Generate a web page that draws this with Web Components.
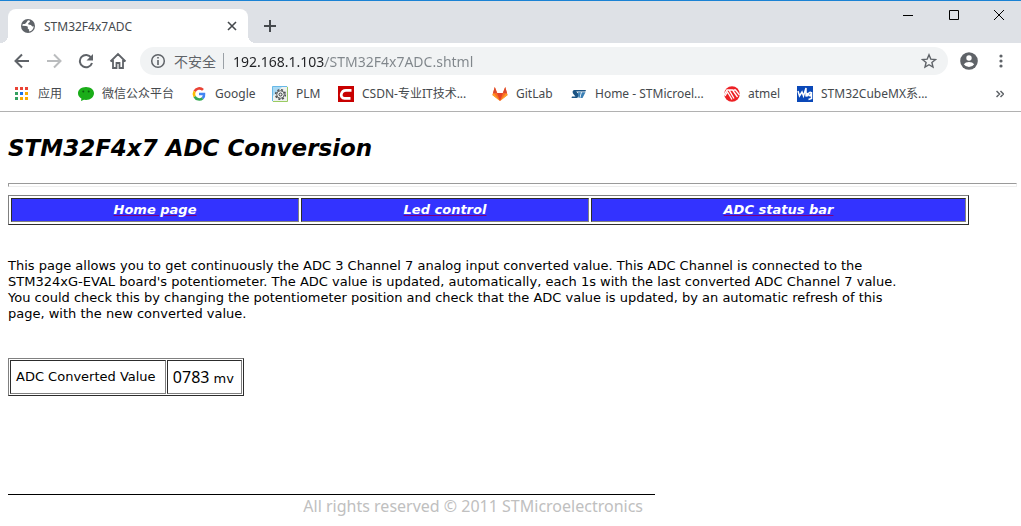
<!DOCTYPE html>
<html lang="en">
<head>
<meta charset="utf-8">
<title>STM32F4x7ADC</title>
<style>
  body { margin: 0; background: #fff; font-family: "Noto Sans", "Noto Sans CJK SC", sans-serif; }
</style>
</head>
<body>
<browser-window></browser-window>

<template id="browser-window">
  <style>
    :host { display: block; }
  </style>
  <tab-strip></tab-strip>
  <nav-bar></nav-bar>
  <bookmark-bar></bookmark-bar>
  <adc-page></adc-page>
</template>

<template id="tab-strip">
  <style>
    :host { display: flex; box-sizing: border-box; height: 43px; padding-left: 8px; background: #dee1e6; border-top: 1px solid #1a82d4; }
    .tab { position: relative; display: flex; align-items: center; box-sizing: border-box; width: 240px; height: 34px; margin-top: 8px; padding: 0 8px 0 12px; background: #fff; border-radius: 8px 8px 0 0; font-size: 12px; color: #45494d; }
    .tab::before, .tab::after { content: ""; position: absolute; bottom: 0; width: 8px; height: 8px; }
    .tab::before { right: 100%; background: radial-gradient(circle at 0 0, transparent 8px, #fff 8px); }
    .tab::after { left: 100%; background: radial-gradient(circle at 100% 0, transparent 8px, #fff 8px); }
    .title { flex: 1; margin-left: 8px; white-space: nowrap; }
    button { display: grid; place-items: center; padding: 0; border: 0; background: none; color: #45494d; }
    .close { width: 16px; height: 16px; }
    .new { width: 28px; height: 28px; margin: 11px 0 0 8px; }
    .controls { display: flex; margin-left: auto; }
    .controls button { width: 46px; height: 28px; color: #000; }
    .controls button:last-child { width: 44px; }
    svg { display: block; }
  </style>
  <div class="tab">
    <svg width="16" height="16" viewBox="0 0 16 16"><circle cx="8" cy="8" r="7" fill="#5f6368"/><path d="M8 2.2l2 .5-.2 1.3-1.6 1.2.2 1.4 2.5.3 1.4 1.5 1.4-.2a5.7 5.7 0 0 1-4.7 5.3l.2-1.8-1.5-1.2.2-1.8-1.7-.8-3.9-.1A5.8 5.8 0 0 1 2.8 6l2.2.1 1.4-1.5z" fill="#fff"/></svg>
    <span class="title">STM32F4x7ADC</span>
    <button class="close" aria-label="Close tab"><svg width="10" height="10" viewBox="0 0 10 10"><path d="M1 1l8 8M9 1L1 9" stroke="currentColor" stroke-width="1.6"/></svg></button>
  </div>
  <button class="new" aria-label="New tab"><svg width="12" height="12" viewBox="0 0 12 12"><path d="M6 0v12M0 6h12" stroke="currentColor" stroke-width="2"/></svg></button>
  <div class="controls">
    <button aria-label="Minimize"><svg width="10" height="10"><path d="M0 5.5h10" stroke="currentColor"/></svg></button>
    <button aria-label="Maximize"><svg width="10" height="10"><path d="M.5 .5h9v9h-9z" fill="none" stroke="currentColor"/></svg></button>
    <button aria-label="Close"><svg width="10" height="10"><path d="M0 0l10 10M10 0L0 10" stroke="currentColor"/></svg></button>
  </div>
</template>

<template id="nav-bar">
  <style>
    :host { display: flex; align-items: center; box-sizing: border-box; height: 36px; padding: 0 4px 0 6px; background: #fff; color: #5f6368; }
    button { display: grid; place-items: center; flex: none; width: 32px; height: 28px; padding: 0; border: 0; background: none; color: inherit; }
    button:disabled { color: #babcbe; }
    .box { flex: 1; display: flex; align-items: center; height: 28px; margin: 0 5px 0 6px; padding-left: 10px; background: #f1f3f4; border-radius: 14px; font-size: 14px; }
    .box svg { flex: none; }
    label { display: flex; align-items: center; margin-left: 8px; white-space: nowrap; }
    label::after { content: ""; width: 1px; height: 16px; margin: 0 9px 0 7px; background: #9aa0a6; }
    input { flex: 1; min-width: 0; height: 24px; padding: 0; border: 0; outline: 0; font: inherit; color: transparent;
      background: linear-gradient(to right, #202124 92px, #80868b 92px); -webkit-background-clip: text; background-clip: text; }
    .star { width: 38px; }
  </style>
  <button aria-label="Back"><svg width="16" height="16" viewBox="0 0 16 16" fill="none" stroke="currentColor" stroke-width="2"><path d="M15 8H2.500M8 1.500L1.500 8 8 14.500"/></svg></button>
  <button aria-label="Forward" disabled><svg width="16" height="16" viewBox="0 0 16 16" fill="none" stroke="currentColor" stroke-width="2"><path d="M1 8h12.500M8 1.500L14.500 8 8 14.500"/></svg></button>
  <button aria-label="Reload"><svg width="16" height="16" viewBox="0 0 16 16"><path d="M13.200 4.600A6.200 6.200 0 1 0 14 10" fill="none" stroke="currentColor" stroke-width="2"/><path d="M15 1v6.500H8.500z" fill="currentColor"/></svg></button>
  <button aria-label="Home"><svg width="18" height="18" viewBox="0 0 18 18"><path d="M1.500 9.500L9 2l7.500 7.500M4 8v8h3.500v-5h3v5H14V8" fill="none" stroke="currentColor" stroke-width="1.800"/></svg></button>
  <div class="box">
    <svg width="16" height="16" viewBox="0 0 16 16"><circle cx="8" cy="8" r="6.300" fill="none" stroke="currentColor" stroke-width="1.500"/><path d="M7.200 4h1.600v1.600H7.200zM7.200 7h1.600v5H7.200z" fill="currentColor"/></svg>
    <label for="url">不安全</label>
    <input id="url" type="text" value="192.168.1.103/STM32F4x7ADC.shtml">
    <button class="star" aria-label="Bookmark this page"><svg width="16" height="16" viewBox="0 0 16 16"><path d="M8 1.800l1.800 4.300 4.700.4-3.600 3 1.100 4.600L8 11.700l-4 2.400 1.100-4.600-3.600-3 4.700-.4z" fill="none" stroke="currentColor" stroke-width="1.400"/></svg></button>
  </div>
  <button aria-label="Profile"><svg width="18" height="18" viewBox="0 0 18 18"><circle cx="9" cy="9" r="8.800" fill="currentColor"/><circle cx="9" cy="6" r="2.700" fill="#fff"/><path d="M3.800 12.200Q5.500 9.900 9 9.900t5.200 2.300A6.300 6.300 0 0 1 9 15a6.300 6.300 0 0 1-5.200-2.800z" fill="#fff"/></svg></button>
  <button aria-label="Menu"><svg width="4" height="14" viewBox="0 0 4 14" fill="currentColor"><circle cx="2" cy="2" r="1.600"/><circle cx="2" cy="7" r="1.600"/><circle cx="2" cy="12" r="1.600"/></svg></button>
</template>

<template id="bookmark-bar">
  <style>
    :host { display: grid; grid-template-columns: 64px 113px 81px 66px 154px 79px 153px 73px 1fr auto; align-items: center; box-sizing: border-box; height: 33px; padding: 0 17px 2px 14px; border-bottom: 1px solid #b1b1b1; background: #fff; }
    button { padding: 0; border: 0; background: none; color: #5f6368; height: 20px; display: grid; place-items: center; }
    svg { display: block; }
  </style>
  <book-mark label="应用"><svg width="16" height="16"><path d="M1 1h3v3H1zM6 1h3v3H6zM11 1h3v3h-3z" fill="#ea4335"/><path d="M1 6h3v3H1zM1 11h3v3H1z" fill="#34a060"/><path d="M6 6h3v3H6z" fill="#1a73e8"/><path d="M11 6h3v3h-3zM6 11h3v3H6zM11 11h3v3h-3z" fill="#f9ab00"/></svg></book-mark>
  <book-mark label="微信公众平台"><svg width="16" height="16"><path d="M8 1c4.700 0 8 2.800 8 6.300S12.700 14 8 14l-2-.3L3 15l.4-2.400C1.200 11.400 0 9.600 0 7.300 0 3.800 3.300 1 8 1z" fill="#1aad19"/><circle cx="5.300" cy="5.500" r="1" fill="#0c5c0c"/><circle cx="10.700" cy="5.500" r="1" fill="#0c5c0c"/></svg></book-mark>
  <book-mark label="Google"><svg width="16" height="16" fill="none" stroke-width="2.600"><path d="M12 3.900A5.200 5.200 0 0 0 3.600 5.400" stroke="#ea4335"/><path d="M3.600 5.400a5.400 5.400 0 0 0 0 5.200" stroke="#fbbc05"/><path d="M3.600 10.600a5.200 5.200 0 0 0 8 1.600" stroke="#34a853"/><path d="M11.600 12.200C12.900 11 13.200 9.600 13 8H8" stroke="#4285f4"/></svg></book-mark>
  <book-mark label="PLM"><svg width="16" height="16"><path d="M0 0h16v16H0z" fill="#eef1ee"/><path d="M.5 15V.5H15" fill="none" stroke="#67b9e8"/><path d="M15.500 1v14.500H1" fill="none" stroke="#9acb62"/><path d="M1 1h9L1 10z" fill="#a9d9f3"/><circle cx="8.500" cy="8.500" r="4.800" fill="none" stroke="#4e5254" stroke-width="1.600" stroke-dasharray="2 1.770"/><circle cx="8.500" cy="8.500" r="3.800" fill="#eef1ee" stroke="#55595c"/><circle cx="8.500" cy="8.500" r="1.500" fill="none" stroke="#33383b"/></svg></book-mark>
  <book-mark label="CSDN-专业IT技术..."><svg width="16" height="16"><path d="M0 0h16v16H0z" fill="#c80000"/><path d="M13.500 4.300H8C2.800 4.300 1.200 12.300 6.500 12.300H12.500" fill="none" stroke="#fff" stroke-width="2.800"/></svg></book-mark>
  <book-mark label="GitLab"><svg width="16" height="16"><path d="M2.800 1L5.300 7h5.400l2.500-6L15.600 9 8 15 .4 9z" fill="#fc6d26"/><path d="M5 7h6l-3 8z" fill="#e24329"/><path d="M.4 9L2 7.500 8 15zM15.600 9L14 7.500 8 15z" fill="#fca326"/><path d="M2.800 1L5 7H1zM13.200 1L15 7h-4z" fill="#d94a30"/></svg></book-mark>
  <book-mark label="Home - STMicroel..."><svg width="16" height="16"><path d="M3.500 4H15l-.6 1.500H5.200L7.500 8c1 2-.5 4-2.500 4H.5l.5-1.500h3.500L2 7.500C1 5.500 2 4 3.500 4z" fill="#1c5484"/><path d="M7 6.200h3L8.500 12H7.700zM10.800 6.200h3.700L11.500 12H9.300z" fill="#3a7fb5"/></svg></book-mark>
  <book-mark label="atmel"><svg width="16" height="16"><circle cx="8" cy="8" r="7.800" fill="#ed2024"/><path d="M0 9l3-5h2l5 8.500M5.500 4h3l5 7M1 10l2.500-4L8 13.500M9.500 4h2l4 5" fill="none" stroke="#fff" stroke-width="1.300"/></svg></book-mark>
  <book-mark label="STM32CubeMX系..."><svg width="16" height="16"><path d="M0 0h16v16H0z" fill="#0a48b8"/><path d="M1 5l1.500 5L5 6l1.500 4L9 2v8.500l1.500-3.500v3.500M14 6.500c-3-1-3 3.500-.8 3.200L14.500 6v6.500l-3 1" fill="none" stroke="#fff" stroke-width="1.500"/></svg></book-mark>
  <button aria-label="More bookmarks"><svg width="8" height="8" viewBox="0 0 8 8" fill="none" stroke="currentColor" stroke-width="1.500"><path d="M.5 1l3 3-3 3M4.500 1l3 3-3 3"/></svg></button>
</template>

<template id="book-mark">
  <style>
    :host { display: block; min-width: 0; }
    a { display: flex; align-items: center; gap: 8px; height: 20px; font-size: 12px; line-height: 20px; color: #45494d; text-decoration: none; white-space: nowrap; }
  </style>
  <a href="#"><slot></slot><span></span></a>
</template>

<template id="adc-page">
  <style>
    :host { display: block; padding: 20px 4px 8px 8px; font: 13px/16px "DejaVu Sans", Verdana, sans-serif; color: #000; }
    h1 { margin: 0; font-size: 23px; line-height: 32px; font-style: italic; font-weight: bold; }
    hr { height: 2px; margin: 19px 0 8px; }
    table { border: 1px outset #808080; }
    th, td { box-sizing: border-box; border: 1px inset #808080; }
    .menu { width: calc(100% - 48px); table-layout: fixed; border-spacing: 2px; }
    .menu col { width: 288px; }
    .menu col:last-child { width: auto; }
    .menu td { padding: 3px; background: #3333ff; text-align: center; font-weight: bold; font-style: italic; }
    .menu a { color: #800080; }
    .menu a span { color: #fff; }
    p { width: 90%; margin: 33px 0 36px; }
    .value { width: 236px; border-spacing: 1px; }
    .value td { height: 33px; padding: 4px 5px; white-space: nowrap; }
    .num, footer { font: 16px/24px "Noto Sans", sans-serif; }
    footer { width: 647px; margin-top: 98px; border-top: 1px solid #000; color: #c0c0c0; }
    footer small { display: block; padding-right: 12px; font-size: 16px; line-height: 22px; text-align: right; }
  </style>
  <h1>STM32F4x7 ADC Conversion</h1>
  <hr>
  <table class="menu">
    <colgroup><col><col><col></colgroup>
    <tr><td><a href="#"><span>Home page</span></a></td><td><a href="#"><span>Led control</span></a></td><td><a href="#"><span>ADC status bar</span></a></td></tr>
  </table>
  <p>This page allows you to get continuously the ADC 3 Channel 7 analog input converted value. This ADC Channel is connected to the STM324xG-EVAL board's potentiometer. The ADC value is updated, automatically, each 1s with the last converted ADC Channel 7 value. You could check this by changing the potentiometer position and check that the ADC value is updated, by an automatic refresh of this page, with the new converted value.</p>
  <table class="value"><tr><td>ADC Converted Value</td><td><span class="num">0783</span> mv</td></tr></table>
  <footer><small>All rights reserved © 2011 STMicroelectronics</small></footer>
</template>

<script>
  class TemplateElement extends HTMLElement {
    constructor() {
      super();
      const template = document.getElementById(this.localName);
      this.attachShadow({ mode: "open" }).append(template.content.cloneNode(true));
    }
  }
  class BookMark extends TemplateElement {
    connectedCallback() {
      this.shadowRoot.querySelector("span").textContent = this.getAttribute("label");
    }
  }
  customElements.define("book-mark", BookMark);
  customElements.define("tab-strip", class extends TemplateElement {});
  customElements.define("nav-bar", class extends TemplateElement {});
  customElements.define("bookmark-bar", class extends TemplateElement {});
  customElements.define("adc-page", class extends TemplateElement {});
  customElements.define("browser-window", class extends TemplateElement {});
</script>
</body>
</html>
